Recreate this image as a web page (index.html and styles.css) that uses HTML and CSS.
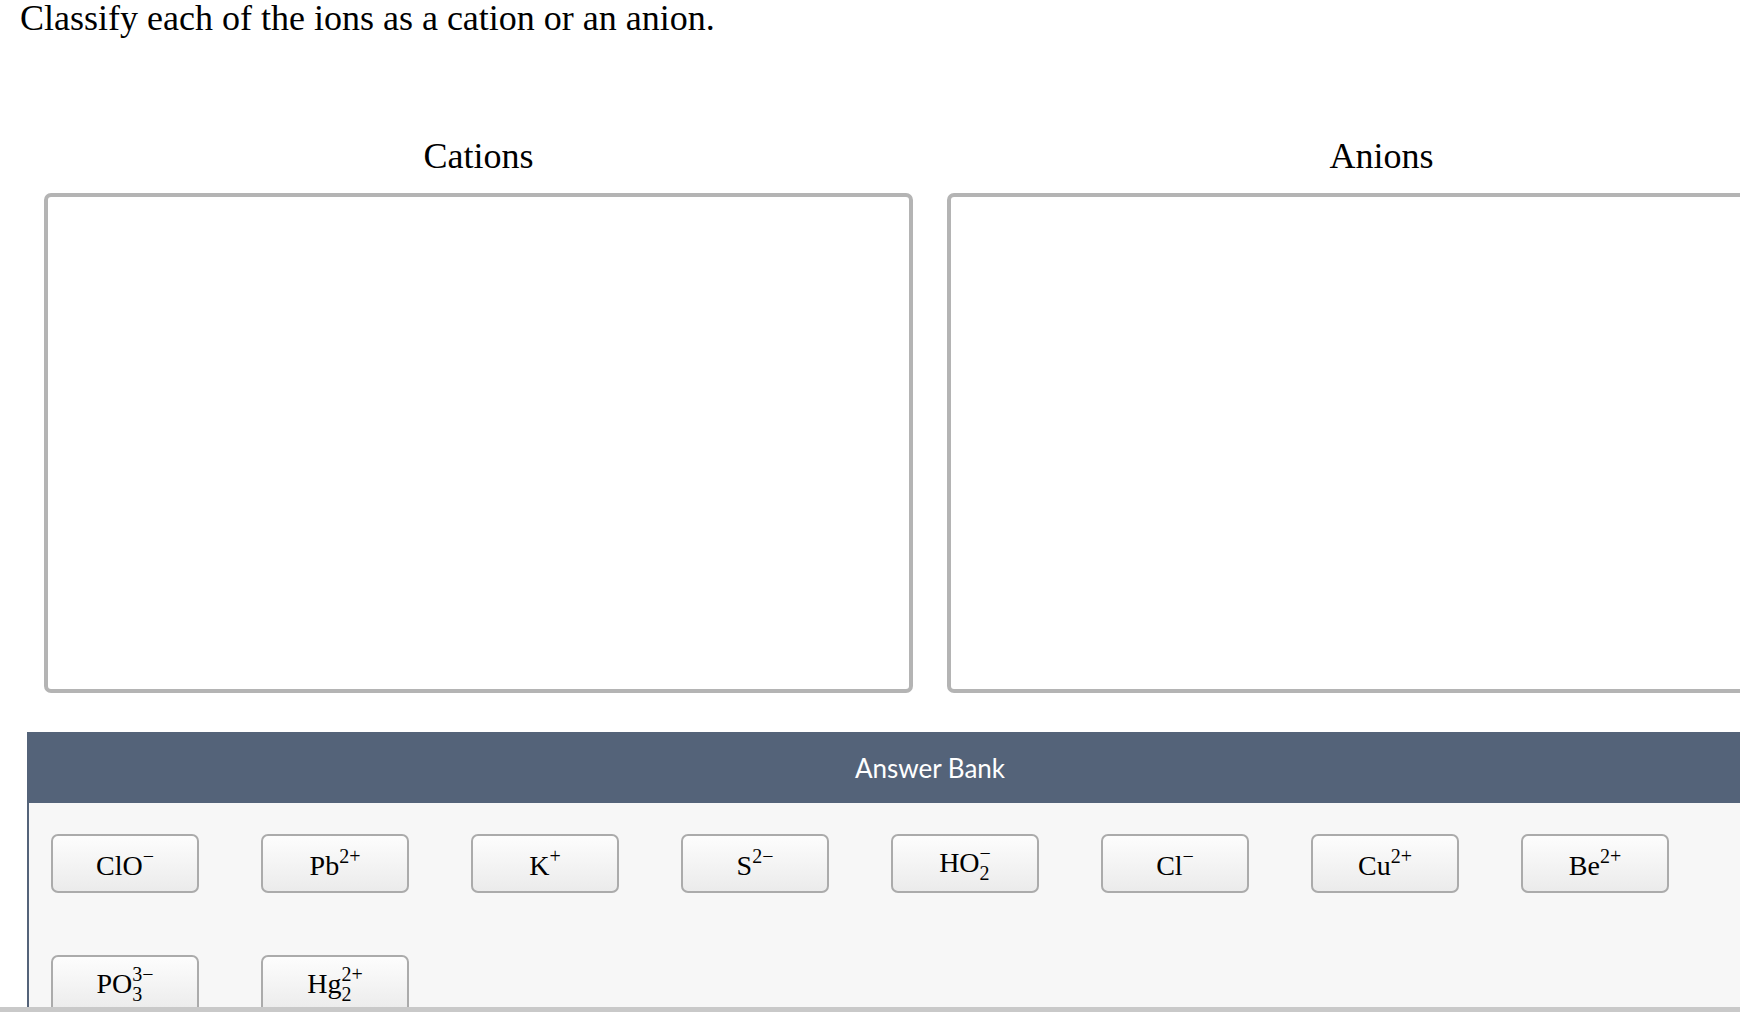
FILE: index.html
```html
<!DOCTYPE html>
<html lang="en">
<head>
    <meta charset="UTF-8">
    <title>Classify ions</title>
    <link rel="stylesheet" href="styles.css">
</head>
<body>

<p class="question">Classify each of the ions as a cation or an anion.</p>

<!-- Drop zones -->
<div class="categories">
    <div class="category">
        <h3>Cations</h3>
        <div class="drop-box"></div>
    </div>
    <div class="category">
        <h3>Anions</h3>
        <div class="drop-box"></div>
    </div>
</div>

<!-- Answer bank -->
<div class="bank">
    <div class="bank-header">Answer Bank</div>
    <div class="bank-body">
        <div class="ion"><span>ClO<span class="sup">&minus;</span></span></div>
        <div class="ion"><span>Pb<span class="sup">2+</span></span></div>
        <div class="ion"><span>K<span class="sup">+</span></span></div>
        <div class="ion"><span>S<span class="sup">2&minus;</span></span></div>
        <div class="ion"><span>HO<span class="stack"><span>&minus;</span><span>2</span></span></span></div>
        <div class="ion"><span>Cl<span class="sup">&minus;</span></span></div>
        <div class="ion"><span>Cu<span class="sup">2+</span></span></div>
        <div class="ion"><span>Be<span class="sup">2+</span></span></div>
        <div class="ion"><span>PO<span class="stack"><span>3&minus;</span><span>3</span></span></span></div>
        <div class="ion"><span>Hg<span class="stack"><span>2+</span><span>2</span></span></span></div>
    </div>
</div>

<div class="frame-edge"></div>

</body>
</html>
```

FILE: styles.css
```css
html, body {
    overflow: hidden;
}

body {
    margin: 0;
    padding: 0;
    font-family: "Liberation Serif", "Times New Roman", serif;
    color: #000;
    background-color: #fff;
}

.question {
    margin: 0;
    padding-left: 20px;
    font-size: 36px;
    line-height: 36px;
}

/* Cations / Anions */
.categories {
    display: flex;
    gap: 34px;
    width: 1772px;
    margin-left: 29px;
    padding: 0 15px;
    margin-top: 102px;
}

.category {
    width: 869px;
    flex-shrink: 0;
}

.category h3 {
    margin: 0 0 19px 0;
    font-size: 36px;
    line-height: 36px;
    font-weight: normal;
    text-align: center;
}

.drop-box {
    height: 492px;
    border: 4px solid #b4b4b4;
    border-radius: 7px;
    background-color: #fff;
}

/* Answer bank */
.bank {
    width: 1806px;
    margin-left: 27px;
    margin-top: 39px;
}

.bank-header {
    height: 71px;
    background-color: #546379;
    color: #fff;
    font-family: Lato, "Open Sans", sans-serif;
    font-size: 26px;
    display: flex;
    align-items: center;
    justify-content: center;
}

.bank-body {
    display: flex;
    flex-wrap: wrap;
    gap: 62px;
    padding: 31px 22px 40px 22px;
    border-left: 2px solid #546379;
    background-color: #f7f7f7;
}

.ion {
    box-sizing: border-box;
    width: 148px;
    height: 59px;
    border: 2px solid #ababab;
    border-radius: 7px;
    background: linear-gradient(#fdfdfd, #ebebeb);
    font-size: 28px;
    line-height: 28px;
    display: flex;
    align-items: center;
    justify-content: center;
    padding-bottom: 2px;
}

.sup {
    font-size: 20px;
    line-height: 1;
    vertical-align: 12px;
}

.stack {
    display: inline-flex;
    flex-direction: column;
    font-size: 20px;
    line-height: 20px;
    vertical-align: 12px;
}

.frame-edge {
    position: fixed;
    left: 0;
    right: 0;
    bottom: 0;
    height: 5px;
    background-color: #c9c9c9;
}
```
